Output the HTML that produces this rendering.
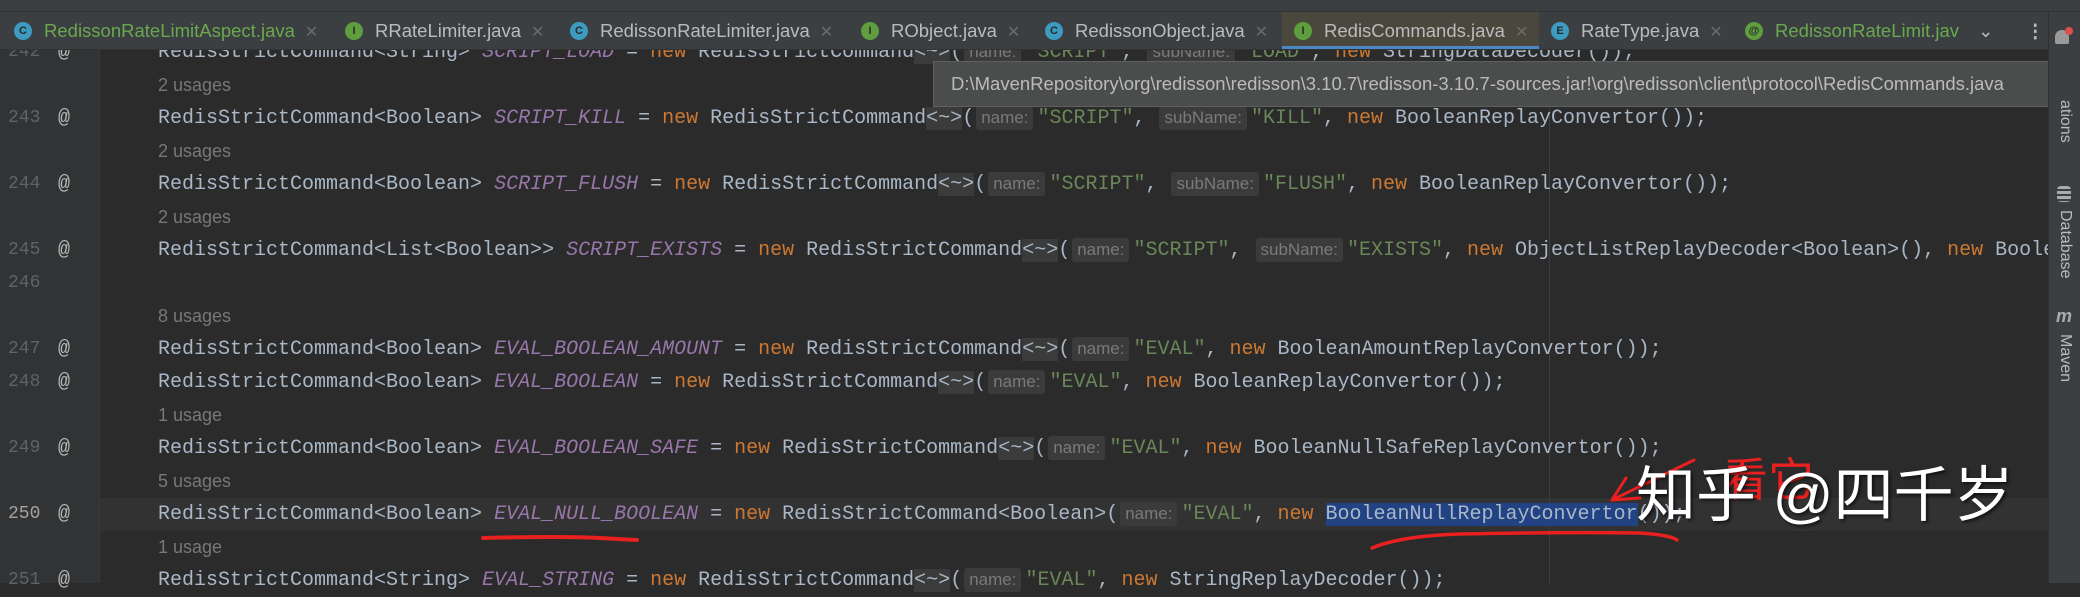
<!DOCTYPE html>
<html><head><meta charset="utf-8"><style>
*{margin:0;padding:0;box-sizing:border-box}
body{width:2080px;height:583px;overflow:hidden;background:#2b2b2b;position:relative;font-family:"Liberation Sans",sans-serif}
.top{position:absolute;left:0;top:0;width:2080px;height:12px;background:#3c3f41;border-bottom:1px solid #323232}
.tabs{position:absolute;left:0;top:12px;width:2048px;height:38px;background:#3c3f41;border-bottom:1px solid #323232;overflow:hidden}
.tab{position:absolute;top:0;height:38px;font-size:18.5px;color:#bbbbbb;line-height:38px;white-space:nowrap}
.ic{position:absolute;top:10px;width:18px;height:18px;border-radius:50%;font-size:11px;line-height:18px;text-align:center;color:#2b2b2b;font-weight:bold}
.c{background:#3d9ac0}.i{background:#5e9e3e}.e{background:#3d9ac0}
.x{color:#6a6a6a;margin-left:10px;font-size:16px}
.gut{position:absolute;left:0;top:50px;width:100px;height:533px;background:#313335;border-right:1px solid #3b3b3b}
.ln{position:absolute;left:8px;width:40px;font-family:"Liberation Mono",monospace;font-size:18px;color:#606366;line-height:33px}
.at{position:absolute;left:58px;font-family:"Liberation Mono",monospace;font-size:20px;color:#b8b8b8;line-height:33px}
.row{position:absolute;left:158px;width:1890px;overflow:hidden;height:33px;line-height:33px;font-family:"Liberation Mono",monospace;font-size:20px;color:#a9b7c6;white-space:pre}
.u{position:absolute;left:158px;height:33px;line-height:33px;font-size:18px;color:#787878}
.k{color:#cc7832}.p{color:#9876aa;font-style:italic}.s{color:#6a8759}
.h{display:inline-block;font-family:"Liberation Sans",sans-serif;font-size:17px;color:#7a7a7a;background:#3b3b3b;border-radius:3px;padding:0 5px;line-height:24px;margin:0 4px 0 2px}
.f{background:#3b3b3b}
.sel{background:#214283}
</style></head><body>
<div style="position:absolute;left:100px;top:498px;width:1948px;height:33px;background:#323232"></div>
<div style="position:absolute;left:1549px;top:50px;width:1px;height:533px;background:#3f3f3f"></div>

<div class="gut"></div>
<div class="ln" style="top:36px">242</div><div class="at" style="top:36px">@</div>
<div class="ln" style="top:102px">243</div><div class="at" style="top:102px">@</div>
<div class="ln" style="top:168px">244</div><div class="at" style="top:168px">@</div>
<div class="ln" style="top:234px">245</div><div class="at" style="top:234px">@</div>
<div class="ln" style="top:267px">246</div>
<div class="ln" style="top:333px">247</div><div class="at" style="top:333px">@</div>
<div class="ln" style="top:366px">248</div><div class="at" style="top:366px">@</div>
<div class="ln" style="top:432px">249</div><div class="at" style="top:432px">@</div>
<div class="ln" style="top:498px;color:#a4a3a3">250</div><div class="at" style="top:498px">@</div>
<div class="ln" style="top:564px">251</div><div class="at" style="top:564px">@</div>

<div class="row" style="top:36px">RedisStrictCommand&lt;String&gt; <span class="p">SCRIPT_LOAD</span> = <span class="k">new</span> RedisStrictCommand<span class="f">&lt;~&gt;</span>(<span class="h">name:</span><span class="s">"SCRIPT"</span>, <span class="h">subName:</span><span class="s">"LOAD"</span>, <span class="k">new</span> StringDataDecoder());</div>
<div class="u" style="top:69px">2 usages</div>
<div class="row" style="top:102px">RedisStrictCommand&lt;Boolean&gt; <span class="p">SCRIPT_KILL</span> = <span class="k">new</span> RedisStrictCommand<span class="f">&lt;~&gt;</span>(<span class="h">name:</span><span class="s">"SCRIPT"</span>, <span class="h">subName:</span><span class="s">"KILL"</span>, <span class="k">new</span> BooleanReplayConvertor());</div>
<div class="u" style="top:135px">2 usages</div>
<div class="row" style="top:168px">RedisStrictCommand&lt;Boolean&gt; <span class="p">SCRIPT_FLUSH</span> = <span class="k">new</span> RedisStrictCommand<span class="f">&lt;~&gt;</span>(<span class="h">name:</span><span class="s">"SCRIPT"</span>, <span class="h">subName:</span><span class="s">"FLUSH"</span>, <span class="k">new</span> BooleanReplayConvertor());</div>
<div class="u" style="top:201px">2 usages</div>
<div class="row" style="top:234px">RedisStrictCommand&lt;List&lt;Boolean&gt;&gt; <span class="p">SCRIPT_EXISTS</span> = <span class="k">new</span> RedisStrictCommand<span class="f">&lt;~&gt;</span>(<span class="h">name:</span><span class="s">"SCRIPT"</span>, <span class="h">subName:</span><span class="s">"EXISTS"</span>, <span class="k">new</span> ObjectListReplayDecoder&lt;Boolean&gt;(), <span class="k">new</span> BooleanReplayConvertor());</div>
<div class="u" style="top:300px">8 usages</div>
<div class="row" style="top:333px">RedisStrictCommand&lt;Boolean&gt; <span class="p">EVAL_BOOLEAN_AMOUNT</span> = <span class="k">new</span> RedisStrictCommand<span class="f">&lt;~&gt;</span>(<span class="h">name:</span><span class="s">"EVAL"</span>, <span class="k">new</span> BooleanAmountReplayConvertor());</div>
<div class="row" style="top:366px">RedisStrictCommand&lt;Boolean&gt; <span class="p">EVAL_BOOLEAN</span> = <span class="k">new</span> RedisStrictCommand<span class="f">&lt;~&gt;</span>(<span class="h">name:</span><span class="s">"EVAL"</span>, <span class="k">new</span> BooleanReplayConvertor());</div>
<div class="u" style="top:399px">1 usage</div>
<div class="row" style="top:432px">RedisStrictCommand&lt;Boolean&gt; <span class="p">EVAL_BOOLEAN_SAFE</span> = <span class="k">new</span> RedisStrictCommand<span class="f">&lt;~&gt;</span>(<span class="h">name:</span><span class="s">"EVAL"</span>, <span class="k">new</span> BooleanNullSafeReplayConvertor());</div>
<div class="u" style="top:465px">5 usages</div>
<div class="row" style="top:498px">RedisStrictCommand&lt;Boolean&gt; <span class="p">EVAL_NULL_BOOLEAN</span> = <span class="k">new</span> RedisStrictCommand&lt;Boolean&gt;(<span class="h">name:</span><span class="s">"EVAL"</span>, <span class="k">new</span> <span class="sel">BooleanNullReplayConvertor</span>());</div>
<div class="u" style="top:531px">1 usage</div>
<div class="row" style="top:564px">RedisStrictCommand&lt;String&gt; <span class="p">EVAL_STRING</span> = <span class="k">new</span> RedisStrictCommand<span class="f">&lt;~&gt;</span>(<span class="h">name:</span><span class="s">"EVAL"</span>, <span class="k">new</span> StringReplayDecoder());</div>

<div class="top"></div>
<div class="tabs">
 <div class="tab" style="left:1282px;width:257px;background:#4a473d"></div>
 <div style="position:absolute;left:1282px;top:34px;width:257px;height:4px;background:#4a88c7"></div>
 <div class="tab" style="left:14px"><span class="ic c" style="left:0">C</span><span style="margin-left:30px;color:#6aa84f">RedissonRateLimitAspect.java</span><span class="x">✕</span></div>
 <div class="tab" style="left:345px"><span class="ic i" style="left:0">I</span><span style="margin-left:30px">RRateLimiter.java</span><span class="x">✕</span></div>
 <div class="tab" style="left:570px"><span class="ic c" style="left:0">C</span><span style="margin-left:30px">RedissonRateLimiter.java</span><span class="x">✕</span></div>
 <div class="tab" style="left:861px"><span class="ic i" style="left:0">I</span><span style="margin-left:30px">RObject.java</span><span class="x">✕</span></div>
 <div class="tab" style="left:1045px"><span class="ic c" style="left:0">C</span><span style="margin-left:30px">RedissonObject.java</span><span class="x">✕</span></div>
 <div class="tab" style="left:1294px"><span class="ic i" style="left:0">I</span><span style="margin-left:30px">RedisCommands.java</span><span class="x">✕</span></div>
 <div class="tab" style="left:1551px"><span class="ic e" style="left:0">E</span><span style="margin-left:30px">RateType.java</span><span class="x">✕</span></div>
 <div class="tab" style="left:1745px"><span class="ic i" style="left:0">@</span><span style="margin-left:30px;color:#6aa84f">RedissonRateLimit.jav</span></div>
 <div class="tab" style="left:1978px;color:#bbb">&#8964;</div>
 <div class="tab" style="left:2026px;color:#bbb;font-weight:bold">⋮</div>
</div>

<div style="position:absolute;left:933px;top:61px;width:1147px;height:46px;background:#4b4d4d;border:1px solid #5e6060;color:#bbbbbb;font-size:18.5px;line-height:44px;padding-left:17px;white-space:nowrap;overflow:hidden">D:\MavenRepository\org\redisson\redisson\3.10.7\redisson-3.10.7-sources.jar!\org\redisson\client\protocol\RedisCommands.java</div>

<div style="position:absolute;left:2048px;top:12px;width:32px;height:571px;background:#3c3f41;border-left:1px solid #323232"></div>
<div style="position:absolute;left:2055px;top:30px;width:14px;height:14px;border-radius:7px 7px 2px 2px;background:#9a9a9a"></div>
<div style="position:absolute;left:2065px;top:27px;width:8px;height:8px;border-radius:50%;background:#e0504a"></div>
<div style="position:absolute;top:100px;left:2074px;transform:rotate(90deg);transform-origin:0 0;font-size:16px;color:#bbb">ations</div>
<div style="position:absolute;left:2057px;top:186px;width:14px;height:16px;background:repeating-linear-gradient(#aaa 0 3px,#3c3f41 3px 5px);border-radius:4px"></div>
<div style="position:absolute;top:210px;left:2074px;transform:rotate(90deg);transform-origin:0 0;font-size:16px;color:#bbb">Database</div>
<div style="position:absolute;top:306px;left:2056px;font-size:18px;color:#aaa;font-style:italic;font-weight:bold">m</div>
<div style="position:absolute;top:334px;left:2074px;transform:rotate(90deg);transform-origin:0 0;font-size:16px;color:#bbb">Maven</div>

<svg style="position:absolute;left:0;top:0" width="2080" height="583">
 <path d="M483 538 Q560 536 600 538 L637 540" stroke="#e82020" stroke-width="4" fill="none" stroke-linecap="round"/>
 <path d="M1372 548 Q1400 536 1460 534 Q1560 532 1640 533 Q1670 535 1677 540" stroke="#e82020" stroke-width="3.5" fill="none" stroke-linecap="round"/>
 <path d="M1694 460 L1612 500 M1612 500 L1640 498 M1612 500 L1626 478" stroke="#e82020" stroke-width="3" fill="none" stroke-linecap="round"/>
</svg>
<div style="position:absolute;left:1722px;top:450px;font-family:'Liberation Sans','Noto Sans CJK SC',sans-serif;font-size:46px;color:#e82020;line-height:60px">看它</div>
<div style="position:absolute;left:1636px;top:460px;font-family:'Liberation Sans','Noto Sans CJK SC',sans-serif;font-size:60px;color:#ffffff;line-height:72px;white-space:nowrap;text-shadow:2px 2px 3px rgba(0,0,0,.6)">知乎 @四千岁</div>
</body></html>
